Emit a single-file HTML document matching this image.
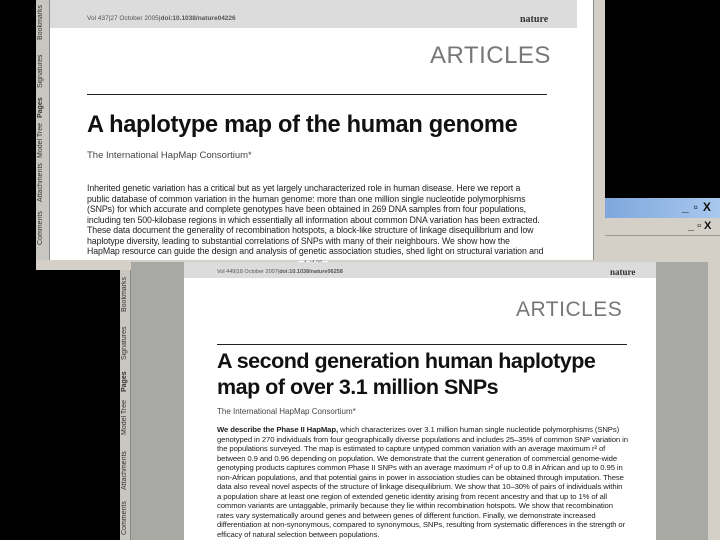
<!DOCTYPE html>
<html><head><style>
body{margin:0;width:720px;height:540px;background:#000;position:relative;overflow:hidden;font-family:"Liberation Sans",sans-serif}
div{position:absolute;box-sizing:border-box}
.t{white-space:nowrap;color:#222}
.abs{font-size:8.8px;line-height:10.5px;color:#222;white-space:nowrap;letter-spacing:-0.1px}
.abs2{font-size:7.7px;line-height:9.5px;color:#222;white-space:nowrap;letter-spacing:-0.1px}
.tab{writing-mode:vertical-rl;transform:rotate(180deg);font-size:7px;color:#333}
</style></head><body>
<div style="left:36px;top:0;width:14px;height:262px;background:#c8c6c0;border-right:1px solid #888"></div>
<div class="tab" style="left:37px;top:0;height:40px">Bookmarks</div>
<div class="tab" style="left:37px;top:48px;height:40px">Signatures</div>
<div class="tab" style="left:37px;top:88px;height:30px;font-weight:bold">Pages</div>
<div class="tab" style="left:37px;top:118px;height:40px">Model Tree</div>
<div class="tab" style="left:37px;top:162px;height:40px">Attachments</div>
<div class="tab" style="left:37px;top:205px;height:40px">Comments</div>
<div style="left:50px;top:0;width:527px;height:28px;background:#dcdcdc"></div>
<div style="left:50px;top:28px;width:527px;height:232px;background:#fff"></div>
<div style="left:577px;top:0;width:16px;height:260px;background:#fff"></div>
<div style="left:593px;top:0;width:12px;height:260px;background:#d4d0c8;border-left:1px solid #888"></div>
<div class="t" style="left:87px;top:15px;font-size:6.5px;color:#555">Vol 437|27 October 2005|<b>doi:10.1038/nature04226</b></div>
<div class="t" style="left:520px;top:14px;font-size:10px;font-family:'Liberation Serif',serif;font-weight:bold;color:#333">nature</div>
<div class="t" style="left:430px;top:42px;font-size:24px;color:#777;letter-spacing:0.5px">ARTICLES</div>
<div style="left:87px;top:94px;width:460px;height:1px;background:#222"></div>
<div class="t" style="left:87px;top:112px;font-size:23.6px;font-weight:bold;color:#111;letter-spacing:-0.3px">A haplotype map of the human genome</div>
<div class="t" style="left:87px;top:150px;font-size:9.5px;color:#444">The International HapMap Consortium*</div>
<div class="abs" style="left:87px;top:183px">Inherited genetic variation has a critical but as yet largely uncharacterized role in human disease. Here we report a<br>public database of common variation in the human genome: more than one million single nucleotide polymorphisms<br>(SNPs) for which accurate and complete genotypes have been obtained in 269 DNA samples from four populations,<br>including ten 500-kilobase regions in which essentially all information about common DNA variation has been extracted.<br>These data document the generality of recombination hotspots, a block-like structure of linkage disequilibrium and low<br>haplotype diversity, leading to substantial correlations of SNPs with many of their neighbours. We show how the<br>HapMap resource can guide the design and analysis of genetic association studies, shed light on structural variation and</div>
<div style="left:36px;top:260px;width:569px;height:10px;background:#d4d0c8"></div>
<div class="t" style="left:298px;top:261px;font-size:6px;color:#333;background:#fff;padding:0 6px">1 of 23</div>
<div style="left:605px;top:198px;width:115px;height:20px;background:linear-gradient(90deg,#7fa7dc,#a8c8ee)"></div>
<div class="t" style="left:682px;top:200px;font-size:12px;font-weight:bold;color:#111;letter-spacing:5px">_▫X</div>
<div style="left:605px;top:218px;width:115px;height:18px;background:#d4d0c8;border-bottom:1px solid #999"></div>
<div class="t" style="left:688px;top:220px;font-size:11px;font-weight:bold;color:#111;letter-spacing:3px">_▫X</div>
<div style="left:605px;top:236px;width:115px;height:26px;background:#d4d0c8"></div>
<div style="left:120px;top:270px;width:11px;height:270px;background:#c8c6c0;border-right:1px solid #888"></div>
<div class="tab" style="left:121px;top:272px;height:40px">Bookmarks</div>
<div class="tab" style="left:121px;top:318px;height:42px">Signatures</div>
<div class="tab" style="left:121px;top:362px;height:30px;font-weight:bold">Pages</div>
<div class="tab" style="left:121px;top:395px;height:40px">Model Tree</div>
<div class="tab" style="left:121px;top:445px;height:45px">Attachments</div>
<div class="tab" style="left:121px;top:495px;height:40px">Comments</div>
<div style="left:131px;top:262px;width:53px;height:278px;background:#a8a8a4"></div>
<div style="left:184px;top:262px;width:472px;height:16px;background:#dcdcdc"></div>
<div style="left:184px;top:278px;width:472px;height:262px;background:#fff"></div>
<div style="left:656px;top:262px;width:52px;height:278px;background:#a8a8a4"></div>
<div style="left:708px;top:262px;width:12px;height:278px;background:#d4d0c8"></div>
<div class="t" style="left:217px;top:269px;font-size:5.5px;color:#555">Vol 449|18 October 2007|<b>doi:10.1038/nature06258</b></div>
<div class="t" style="left:610px;top:267px;font-size:9px;font-family:'Liberation Serif',serif;font-weight:bold;color:#333">nature</div>
<div class="t" style="left:516px;top:298px;font-size:21px;color:#777;letter-spacing:0.5px">ARTICLES</div>
<div style="left:217px;top:344px;width:410px;height:1px;background:#222"></div>
<div class="t" style="left:217px;top:348px;font-size:21.5px;line-height:26px;font-weight:bold;color:#111;letter-spacing:-0.5px">A second generation human haplotype<br>map of over 3.1 million SNPs</div>
<div class="t" style="left:217px;top:407px;font-size:8px;color:#444">The International HapMap Consortium*</div>
<div class="abs2" style="left:217px;top:425px"><b>We describe the Phase II HapMap,</b> which characterizes over 3.1 million human single nucleotide polymorphisms (SNPs)<br>genotyped in 270 individuals from four geographically diverse populations and includes 25–35% of common SNP variation in<br>the populations surveyed. The map is estimated to capture untyped common variation with an average maximum r² of<br>between 0.9 and 0.96 depending on population. We demonstrate that the current generation of commercial genome-wide<br>genotyping products captures common Phase II SNPs with an average maximum r² of up to 0.8 in African and up to 0.95 in<br>non-African populations, and that potential gains in power in association studies can be obtained through imputation. These<br>data also reveal novel aspects of the structure of linkage disequilibrium. We show that 10–30% of pairs of individuals within<br>a population share at least one region of extended genetic identity arising from recent ancestry and that up to 1% of all<br>common variants are untaggable, primarily because they lie within recombination hotspots. We show that recombination<br>rates vary systematically around genes and between genes of different function. Finally, we demonstrate increased<br>differentiation at non-synonymous, compared to synonymous, SNPs, resulting from systematic differences in the strength or<br>efficacy of natural selection between populations.</div>
</body></html>
